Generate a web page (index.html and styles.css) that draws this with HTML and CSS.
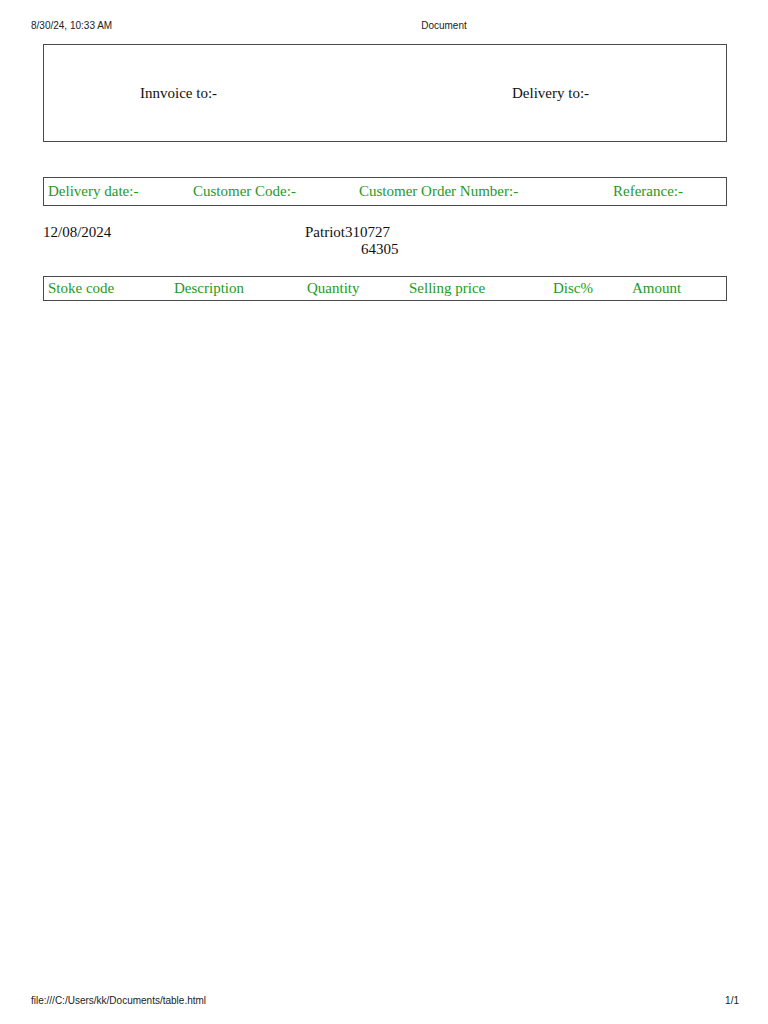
FILE: index.html
```html
<!DOCTYPE html>
<html>
<head>
<meta charset="utf-8">
<title>Document</title>
<link rel="stylesheet" href="styles.css">
</head>
<body>
<div class="page">
  <header class="print-head">
    <span class="ph-date">8/30/24, 10:33 AM</span>
    <span class="ph-title">Document</span>
  </header>
  <main class="content">
    <section class="box address">
      <div>Innvoice to:-</div>
      <div>Delivery to:-</div>
    </section>
    <section class="box meta green">
      <div>Delivery date:-</div>
      <div>Customer Code:-</div>
      <div>Customer Order Number:-</div>
      <div>Referance:-</div>
    </section>
    <section class="values">
      <div class="v-date">12/08/2024</div>
      <div class="v-code">
        <div>Patriot310727</div>
        <div class="v-order">64305</div>
      </div>
    </section>
    <section class="box items green">
      <div>Stoke code</div>
      <div>Description</div>
      <div>Quantity</div>
      <div>Selling price</div>
      <div>Disc%</div>
      <div>Amount</div>
    </section>
  </main>
  <footer class="print-foot">
    <span>file:///C:/Users/kk/Documents/table.html</span>
    <span>1/1</span>
  </footer>
</div>
</body>
</html>
```

FILE: styles.css
```css
html, body {
  margin: 0;
  padding: 0;
  background: #fff;
}
.page {
  min-height: 1024px;
  display: flex;
  flex-direction: column;
  box-sizing: border-box;
  color: #111;
}
.print-head, .print-foot {
  font-family: "Liberation Sans", Arial, sans-serif;
  font-size: 10px;
  line-height: 12px;
  color: #222;
  display: flex;
  padding: 0 29px 0 31px;
}
.print-head {
  padding-top: 20px;
}
.ph-title {
  margin-left: 309px;
}
.print-foot {
  margin-top: auto;
  justify-content: space-between;
  padding-bottom: 17px;
}
.content {
  font-family: "Liberation Serif", "Times New Roman", serif;
  font-size: 15px;
  line-height: 16px;
  padding: 12px 41px 0 43px;
}
.box {
  border: 1px solid #4a4a4a;
}
.green {
  color: #1e9a1e;
}
.address {
  display: grid;
  grid-template-columns: 372px auto;
  padding: 40px 0 40px 96px;
}
.meta {
  margin-top: 35px;
  display: grid;
  grid-template-columns: 145px 166px 254px auto;
  padding: 5px 0 6px 4px;
}
.values {
  margin-top: 18px;
  display: grid;
  grid-template-columns: 262px auto;
  line-height: 17px;
}
.v-order {
  padding-left: 56px;
}
.items {
  margin-top: 18px;
  display: grid;
  grid-template-columns: 126px 133px 102px 144px 79px auto;
  padding: 3px 0 4px 4px;
}
```
